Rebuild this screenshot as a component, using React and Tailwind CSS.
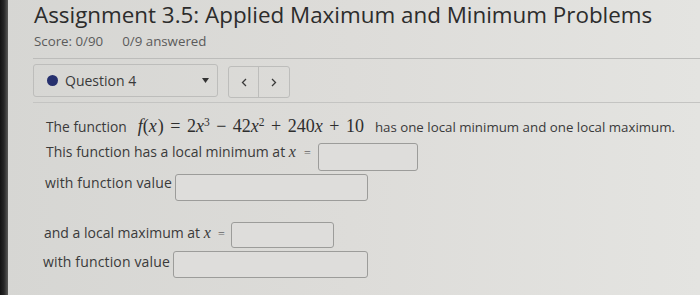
import React from "react";

const mathFont = { fontFamily: '"Liberation Serif", "DejaVu Serif", serif' };

function Input({ w, h = "h-[27px]", extra = "" }) {
  return (
    <div
      className={`${w} ${h} ${extra} shrink-0 rounded-[3px] border border-[#9c9c9a] bg-[#dedddb]`}
    />
  );
}

function Op({ children }) {
  return <span className="mx-[6.5px]">{children}</span>;
}

function XEq({ gap = "ml-[5px]" }) {
  return (
    <span style={mathFont}>
      <i className="text-[16px]">x</i>
      <span className={`${gap} text-[12px] text-[#666]`}>=</span>
    </span>
  );
}

export default function App() {
  return (
    <div
      className="flex h-[295px] w-[700px] overflow-hidden bg-gradient-to-r from-[#d6d6d3] via-[#dddcd9] to-[#e4e4e1] text-[#3a3a3a]"
      style={{ fontFamily: '"Open Sans", "Liberation Sans", sans-serif' }}
    >
      <div className="w-[8px] shrink-0 bg-gradient-to-r from-[#121212] via-[#262626] to-[#5a5a58]" />
      <div className="flex min-w-0 flex-1 flex-col pl-[25px]">
        <div className="pl-[1px] pt-[1px] text-[22.4px] leading-[28px] text-[#2c2c2c] whitespace-nowrap">
          Assignment 3.5: Applied Maximum and Minimum Problems
        </div>
        <div className="mt-[4px] flex gap-[19px] pl-[1px] text-[13.3px] leading-[16px] text-[#5b5b5b] whitespace-nowrap">
          <span>Score: 0/90</span>
          <span>0/9 answered</span>
        </div>
        <div className="mt-[9px] h-px bg-[#bcbcba]" />

        <div className="mt-[5px] flex items-start">
          <div className="flex h-[33px] w-[185px] items-center rounded-[3px] border border-[#bdbdbb] pl-[13px] pr-[8px]">
            <span className="h-[11px] w-[11px] rounded-full bg-[#26306e]" />
            <span className="ml-[7px] text-[14px] text-[#3a3a3a]">Question 4</span>
            <svg className="ml-auto" width="7" height="5" viewBox="0 0 7 5">
              <polygon points="0,0 7,0 3.5,5" fill="#333" />
            </svg>
          </div>
          <div className="ml-[10px] mt-[2px] flex h-[32px] w-[62px] rounded-[3px] border border-[#bdbdbb]">
            <div className="flex w-[30px] items-center justify-center border-r border-[#bdbdbb]">
              <svg width="6" height="9" viewBox="0 0 6 9">
                <polyline points="5,1 1.5,4.5 5,8" fill="none" stroke="#3a3a3a" strokeWidth="1.3" />
              </svg>
            </div>
            <div className="flex flex-1 items-center justify-center">
              <svg width="6" height="9" viewBox="0 0 6 9">
                <polyline points="1,1 4.5,4.5 1,8" fill="none" stroke="#3a3a3a" strokeWidth="1.3" />
              </svg>
            </div>
          </div>
        </div>
        <div className="mt-[4px] h-px bg-[#c4c4c2]" />

        <div className="flex flex-col pl-[13px] text-[14px] leading-[20px] whitespace-nowrap">
          <div className="mt-[14px] flex h-[20px] items-baseline">
            <span className="text-[13.8px]">The function</span>
            <span className="ml-[11px] mr-[11px] text-[18px] leading-[18px] text-[#2e2e2e]" style={mathFont}>
              <i>f</i>(<i className="mr-[1px]">x</i>)<Op>=</Op>2<i>x</i>
              <sup className="text-[11.5px]">3</sup>
              <Op>−</Op>42<i>x</i>
              <sup className="text-[11.5px]">2</sup>
              <Op>+</Op>240<i>x</i>
              <Op>+</Op>10
            </span>
            <span className="text-[13.3px]">has one local minimum and one local maximum.</span>
          </div>

          <div className="mt-[5px] flex items-start">
            <span>
              This function has a local minimum at{" "}
              <XEq gap="ml-[8px]" />
            </span>
            <Input w="w-[100px]" h="h-[28px]" extra="ml-[7px] mt-[1px]" />
          </div>

          <div className="mt-[2px] -ml-[1px] flex items-start">
            <span className="tracking-[0.15px]">with function value</span>
            <Input w="w-[193px]" extra="ml-[3px] mt-[1px]" />
          </div>

          <div className="mt-[21px] -ml-[2px] flex items-start">
            <span className="mt-[1px]">
              and a local maximum at{" "}
              <XEq gap="ml-[7px]" />
            </span>
            <Input w="w-[103px]" h="h-[26px]" extra="ml-[6px]" />
          </div>

          <div className="mt-[3px] -ml-[3px] flex items-start">
            <span className="mt-[1px] tracking-[0.15px]">with function value</span>
            <Input w="w-[195px]" extra="ml-[3px]" />
          </div>
        </div>
      </div>
    </div>
  );
}
